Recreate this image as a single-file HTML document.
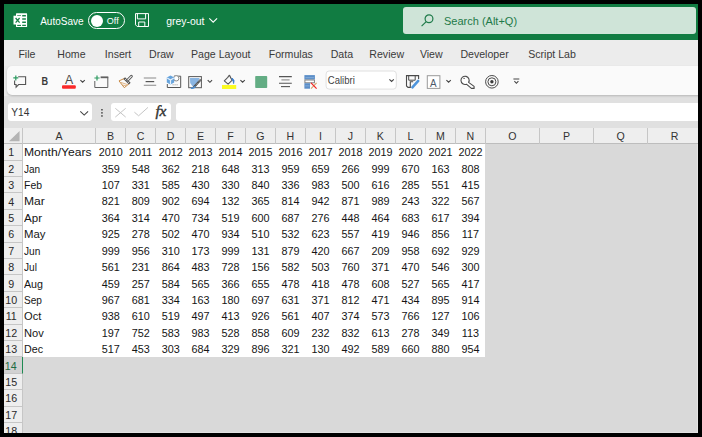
<!DOCTYPE html>
<html lang="en">
<head>
<meta charset="utf-8">
<title>grey-out - Excel</title>
<style>
*{box-sizing:border-box;margin:0;padding:0}
html,body{width:702px;height:437px;overflow:hidden;background:#000}
body{font-family:"Liberation Sans",sans-serif;position:relative;color:#333}
.abs,.app *{position:absolute}
.app{position:absolute;left:4px;top:4px;width:694px;height:429px;background:#d9d9d9;overflow:hidden}
/* coordinates inside .app are shifted by -4,-4: use wrapper */
.w{position:absolute;left:-4px;top:-4px;width:702px;height:437px}
.title{left:4px;top:4px;width:694px;height:36px;background:#117c42}
.title span{color:#fff;white-space:nowrap}
.search{left:403px;top:7.1px;width:292.8px;height:26.6px;background:#cfe4d8;border-radius:3px}
.search span{color:#1e7a49;font-size:11px;left:41px;top:7.7px;line-height:13px}
.menu{left:4px;top:40px;width:694px;height:26px;background:#ececec}
.menu span{font-size:10.6px;line-height:14px;top:7.4px;color:#3a3a3a;white-space:nowrap}
.ribbonbg{left:4px;top:66px;width:694px;height:37px;background:#e9e9e9}
.card{left:7px;top:66px;width:700px;height:29.4px;background:#fafafa;border-radius:5px;box-shadow:0 1px 2px rgba(0,0,0,.22)}
.fbar{left:4px;top:95.5px;width:694px;height:32.5px;background:#e0e0e0}
.namebox{left:8px;top:103.4px;width:84px;height:17.8px;background:#fff;border-radius:3px}
.namebox span{font-size:10.2px;left:3.2px;top:3.8px;line-height:12px;color:#333}
.fbtn{left:110.5px;top:103.4px;width:60.3px;height:17.8px;background:#fff;border-radius:3px}
.finput{left:176.2px;top:103.4px;width:530px;height:17.8px;background:#fff;border-radius:3px}
.fx{font-family:"Liberation Serif",serif;font-style:italic;font-size:15.5px;left:155.4px;top:103.2px;line-height:16px;color:#333;letter-spacing:-0.2px;-webkit-text-stroke:.4px #333}
svg{position:absolute;overflow:visible}
/* sheet */
.sheet{left:0;top:0;width:702px;height:437px}
.white{background:#fff}
.colhdr{left:4px;width:694px;background:#eee;border-bottom:1px solid #bdbdbd}
.corner{left:4px;top:127.5px;width:18.9px;height:16px;border-right:1px solid #c6c6c6}
.ch{top:127.5px;height:16px;font-size:10.6px;line-height:16px;text-align:center;color:#333;border-right:1px solid #c6c6c6;padding-top:0.7px}
.rowhdr{left:4px;top:143.5px;width:18.9px;height:300px;background:#eee;border-right:1px solid #c6c6c6}
.rh{left:4px;width:18.9px;height:16.41px;font-size:10.7px;line-height:16.4px;text-align:center;color:#2a2a2a;border-bottom:1px solid #c6c6c6;padding-right:4.5px;padding-top:0.2px;margin-top:0.6px}
.rh.sel{background:#d2d2d2;color:#1e6b41;border-right:1.2px solid #1f8a52}
.c{height:16.41px;font-size:10.8px;line-height:16.4px;color:#151515;white-space:nowrap;padding-top:0.75px}
.c.a{left:24.4px;transform-origin:0 0}
.c.n{width:29.98px;text-align:center}
</style>
</head>
<body>
<div class="app"><div class="w">

<!-- title bar -->
<div class="title"></div>
<svg style="left:13px;top:13px" width="15" height="15" viewBox="13 13 15 15">
  <rect x="16" y="13.3" width="11.1" height="13.7" rx=".6" fill="#fff"/>
  <path d="M22.2 14.9h3.7v1.6h-3.7zM22.2 18.2h3.7v1.6h-3.7zM22.2 21.5h3.7v1.6h-3.7zM22.2 24.7h3.7v1.4h-3.7zM17.2 14.9h3.8v1.6h-3.8zM17.2 24.7h3.8v1.4h-3.8z" fill="#1a8349"/>
  <rect x="13.5" y="15.7" width="7.7" height="8.8" fill="#fff"/>
  <path d="M15.6 18L19.6 22.7M19.6 18L15.6 22.7" stroke="#1a8349" stroke-width="1.3" fill="none"/>
</svg>
<div class="title" style="background:none"><span style="left:36.2px;top:11.9px;font-size:10px;line-height:12px">AutoSave</span></div>
<div style="left:87.8px;top:12.2px;width:37.4px;height:17px;border:1px solid #fff;border-radius:9px"></div>
<div style="left:90.6px;top:14.5px;width:12.2px;height:12.2px;border-radius:50%;background:#fff"></div>
<div class="title" style="background:none"><span style="left:102.8px;top:11.6px;font-size:9px;line-height:11px">Off</span></div>
<svg style="left:135px;top:13.3px" width="14" height="14" viewBox="0 0 14 14" fill="none" stroke="#fff" stroke-width="1">
  <path d="M0.5 0.6H13.5V13.5H2.2L0.5 11.8Z"/>
  <path d="M2.4 0.5V5.9H10.6V0.5M3.7 13.5V9H9.8V13.5"/>
</svg>
<div class="title" style="background:none"><span style="left:162.3px;top:10.6px;font-size:10.4px;line-height:13px">grey-out</span></div>
<svg style="left:208.9px;top:18.1px" width="8.4" height="4.8" viewBox="0 0 8.4 4.8"><path d="M0.3 0.4L4.2 4.2L8.1 0.4" stroke="#fff" stroke-width="1.1" fill="none"/></svg>
<div class="search"><span>Search (Alt+Q)</span></div>
<svg style="left:420.5px;top:14px" width="13" height="13" viewBox="0 0 13 13" fill="none" stroke="#1e7a49" stroke-width="1.2"><circle cx="8" cy="4.8" r="3.9"/><path d="M5.2 7.6L0.6 12.2"/></svg>

<!-- menu -->
<div class="menu">
<span style="left:14.4px">File</span>
<span style="left:53.3px">Home</span>
<span style="left:100.8px">Insert</span>
<span style="left:145px">Draw</span>
<span style="left:187px">Page Layout</span>
<span style="left:264.7px">Formulas</span>
<span style="left:326.7px">Data</span>
<span style="left:365.3px">Review</span>
<span style="left:415.9px">View</span>
<span style="left:456.4px">Developer</span>
<span style="left:524.2px">Script Lab</span>
</div>

<!-- ribbon -->
<div class="ribbonbg"></div>
<div class="fbar"></div>
<div class="card"></div>
<svg style="left:0;top:66px" width="702" height="30" viewBox="0 66 702 30" fill="none">
  <!-- new comment -->
  <path d="M18.2 76.7H25.6V84.5H18.6L16.1 87.1V84.5H14.6V80.4" stroke="#555" stroke-width="1.1"/>
  <path d="M15.8 75.4V80.4M13.3 77.9H18.3" stroke="#2c9a60" stroke-width="1.2"/>
  <!-- bold -->
  <text x="41.6" y="85.1" font-family="Liberation Sans, sans-serif" font-weight="bold" font-size="11.2" fill="#3a3a3a" textLength="6.6" lengthAdjust="spacingAndGlyphs">B</text>
  <!-- font colour -->
  <text x="64.9" y="84.4" font-family="Liberation Sans, sans-serif" font-size="12.6" fill="#4a4a4a" textLength="8.2" lengthAdjust="spacingAndGlyphs">A</text>
  <rect x="62" y="85.2" width="13.8" height="3.6" rx="1" fill="#fa2a2a"/>
  <path d="M80.4 80.1L82.6 82.2L84.8 80.1" stroke="#444" stroke-width="1.1"/>
  <!-- new window/sheet -->
  <path d="M94.8 81V87.5H107.8V77.3" stroke="#606060" stroke-width="1"/>
  <path d="M100.6 77.3H108.3" stroke="#606060" stroke-width="1.8"/>
  <path d="M97 75.4V80.6M94.4 78H99.6" stroke="#2c9a60" stroke-width="1.2"/>
  <!-- format painter -->
  <path d="M124.3 78.5L119 80.9L124.3 87.7L129.4 83.4Z" stroke="#c98a45" stroke-width="1" stroke-linejoin="round"/>
  <path d="M120.8 82.4L127.5 84.6M122.4 85L126 85.8" stroke="#d9a56b" stroke-width=".8"/>
  <path d="M124.2 78.2L129.8 83.6" stroke="#555" stroke-width="2.4"/><path d="M125 79L129 82.8" stroke="#f2f2f2" stroke-width=".8"/>
  <path d="M127.6 80.2L131.4 76.2" stroke="#555" stroke-width="2.8" stroke-linecap="round"/>
  <path d="M127.9 79.9L131.3 76.3" stroke="#f4f4f4" stroke-width="1.1" stroke-linecap="round"/>
  <!-- align -->
  <path d="M143.8 78H156.2M143.8 85.2H156.2" stroke="#8a8a8a" stroke-width="1.1"/>
  <path d="M145.6 81.6H154.2" stroke="#555" stroke-width="1.2"/>
  <!-- 3d models -->
  <path d="M174 76.2H180.7V87.5H167.3V84" stroke="#555" stroke-width="1"/>
  <path d="M172.5 84.8H178.5" stroke="#999" stroke-width=".9" stroke-dasharray="1.2 .8"/>
  <circle cx="176.2" cy="78.3" r="2.7" fill="#fff" stroke="#8a8a8a" stroke-width="1"/>
  <path d="M170.5 75.4L174.2 77.6V82.4L170.5 84.6L166.8 82.4V77.6Z" fill="#66a3dc"/>
  <path d="M170.5 80V84.2M167.2 78L170.5 80L173.8 78" stroke="#e6f0fa" stroke-width="1.2"/>
  <!-- picture format -->
  <rect x="188.7" y="76.6" width="12.7" height="11.1" stroke="#5a5a5a" stroke-width="1"/>
  <path d="M190 77.9H199.6L196 86.8H192.8L190.2 83Z" fill="#8ab5e2"/>
  <path d="M200.8 79.6L193.8 87.2" stroke="#444" stroke-width="2"/>
  <path d="M200.4 80L194.6 86.3" stroke="#e8e8e8" stroke-width=".8" stroke-dasharray="1 1"/>
  <path d="M191.6 88.1Q193.6 88.6 195 86.6" stroke="#4a8fd6" stroke-width="1.6" stroke-linecap="round"/>
  <path d="M207.7 80.2L209.9 82.3L212.1 80.2" stroke="#444" stroke-width="1.1"/>
  <!-- fill colour -->
  <path d="M224.3 80.8L227.8 77.4L229.2 75.3Q230.2 76 230.6 77.6L232.2 80.2L228.1 84.2Z" stroke="#555" stroke-width="1.1" stroke-linejoin="round"/>
  <path d="M232.2 78Q235.2 80.4 233.6 83.6Q233.4 80.6 232 79.4Z" fill="#3b7fd0" stroke="#3b7fd0" stroke-width=".8"/>
  <rect x="222" y="85" width="14.2" height="4" fill="#fbfb22"/>
  <path d="M240.4 80.1L242.6 82.2L244.8 80.1" stroke="#444" stroke-width="1.1"/>
  <!-- green square -->
  <rect x="255.2" y="76" width="12" height="12" rx=".8" fill="#63ad84"/>
  <!-- centre -->
  <path d="M279 76.6H291.8M279 83.3H291.8" stroke="#555" stroke-width="1.1"/>
  <path d="M281.4 79.9H289.6" stroke="#8a8a8a" stroke-width="1.1"/>
  <path d="M281 86.6H290" stroke="#555" stroke-width="1.1"/>
  <!-- clear table -->
  <rect x="304.4" y="75.1" width="10.5" height="4.4" fill="#5b8ec8"/>
  <path d="M305.4 77.7H313.9" stroke="#8fb4dd" stroke-width=".8"/>
  <rect x="304.9" y="80" width="9.5" height="2.8" fill="#fff" stroke="#777" stroke-width=".9"/>
  <rect x="304.4" y="83.2" width="5.6" height="5.5" fill="#5b8ec8"/>
  <path d="M305.2 85.9H309.6" stroke="#8fb4dd" stroke-width=".8"/>
  <path d="M316.6 82.8L311 88.6" stroke="#d6a36c" stroke-width="1.1"/>
  <path d="M311 82.8L316.6 88.6" stroke="#f52222" stroke-width="1.2"/>
  <!-- font box -->
  <rect x="326.1" y="71" width="70.2" height="18.1" rx="3" fill="#fff" stroke="#dcdcdc" stroke-width=".9"/>
  <text x="327.8" y="84.4" font-family="Liberation Sans, sans-serif" font-size="10.6" fill="#444" textLength="27" lengthAdjust="spacingAndGlyphs">Calibri</text>
  <path d="M389.4 79.4L391.6 81.5L393.8 79.4" stroke="#444" stroke-width="1.1"/>
  <!-- save as -->
  <path d="M413.2 81.7H410.3V87.4H408L406.5 86V75.6H418.6V79" stroke="#4a4a4a" stroke-width="1.1"/>
  <path d="M408.7 75.6V80.2H415.2V75.6" stroke="#4a4a4a" stroke-width="1"/>
  <path d="M418.2 80.9L412.4 87.4" stroke="#4f95dc" stroke-width="2.6" stroke-linecap="round"/>
  <!-- text box A -->
  <rect x="427.3" y="75.7" width="12.6" height="12.7" fill="#fff" stroke="#9a9a9a" stroke-width="1"/>
  <text x="430" y="86.9" font-family="Liberation Sans, sans-serif" font-size="11" fill="#4d5a6a" textLength="6.6" lengthAdjust="spacingAndGlyphs">A</text>
  <path d="M446.4 80.1L448.6 82.2L450.8 80.1" stroke="#444" stroke-width="1.1"/>
  <!-- key -->
  <path d="M468.6 82.4A4.1 4.1 0 1 0 466.4 84.2L471.4 88.4H474.1V86.4Z" fill="#fff" stroke="#4a4a4a" stroke-width="1.1" stroke-linejoin="round"/>
  <path d="M463.4 78.4H464.8" stroke="#4a4a4a" stroke-width="1"/>
  <!-- target -->
  <circle cx="491.9" cy="81.8" r="6.3" stroke="#4a4a4a" stroke-width="1"/>
  <circle cx="491.9" cy="81.8" r="4" stroke="#4a4a4a" stroke-width="1"/>
  <circle cx="491.9" cy="81.8" r="1.7" fill="#3a3a3a"/>
  <!-- overflow -->
  <path d="M513.4 79H519.3" stroke="#555" stroke-width="1.1"/>
  <path d="M514.4 81.2L516.4 83.3L518.4 81.2" stroke="#444" stroke-width="1.1"/>
</svg>


<!-- formula bar -->
<div class="namebox"><span>Y14</span></div>
<svg style="left:79.8px;top:111px" width="8.4" height="4.6" viewBox="0 0 8.4 4.6"><path d="M0.3 0.4L4.2 4.1L8.1 0.4" stroke="#444" stroke-width="1.1" fill="none"/></svg>
<svg style="left:100.5px;top:108.6px" width="2" height="8" viewBox="0 0 2 8" fill="#444"><rect x="0.2" y="0" width="1.5" height="1.5"/><rect x="0.2" y="3.1" width="1.5" height="1.5"/><rect x="0.2" y="6.2" width="1.5" height="1.5"/></svg>
<div class="fbtn"></div>
<svg style="left:115px;top:108px" width="11" height="9.4" viewBox="0 0 11 9.4"><path d="M0.3 0.3L10.7 9.1M10.7 0.3L0.3 9.1" stroke="#c4c4c4" stroke-width="1" fill="none"/></svg>
<svg style="left:133.5px;top:107.4px" width="14.4" height="9.2" viewBox="0 0 14.4 9.2"><path d="M0.4 5.2L4.6 8.8L14 0.4" stroke="#c4c4c4" stroke-width="1" fill="none"/></svg>
<div class="fx">fx</div>
<div class="finput"></div>

<div class="sheet">
<div class="white" style="left:22.9px;top:143.5px;width:462.54px;height:213.33px"></div>
<div class="colhdr" style="top:127.5px;height:16.5px"></div>
<div class="corner"></div><svg style="left:8.8px;top:131.3px" width="10.6" height="10.2" viewBox="0 0 10.6 10.2"><path d="M10.6 0V10.2H0Z" fill="#b4b4b4"/></svg>
<div class="ch" style="left:22.90px;width:73.50px">A</div>
<div class="ch" style="left:95.70px;width:30.68px">B</div>
<div class="ch" style="left:125.68px;width:30.68px">C</div>
<div class="ch" style="left:155.66px;width:30.68px">D</div>
<div class="ch" style="left:185.64px;width:30.68px">E</div>
<div class="ch" style="left:215.62px;width:30.68px">F</div>
<div class="ch" style="left:245.60px;width:30.68px">G</div>
<div class="ch" style="left:275.58px;width:30.68px">H</div>
<div class="ch" style="left:305.56px;width:30.68px">I</div>
<div class="ch" style="left:335.54px;width:30.68px">J</div>
<div class="ch" style="left:365.52px;width:30.68px">K</div>
<div class="ch" style="left:395.50px;width:30.68px">L</div>
<div class="ch" style="left:425.48px;width:30.68px">M</div>
<div class="ch" style="left:455.46px;width:30.68px">N</div>
<div class="ch" style="left:485.44px;width:54.80px">O</div>
<div class="ch" style="left:539.54px;width:54.80px">P</div>
<div class="ch" style="left:593.64px;width:54.80px">Q</div>
<div class="ch" style="left:647.74px;width:54.80px">R</div>
<div class="rowhdr"></div>
<div class="rh" style="top:143.50px">1</div>
<div class="rh" style="top:159.91px">2</div>
<div class="rh" style="top:176.32px">3</div>
<div class="rh" style="top:192.73px">4</div>
<div class="rh" style="top:209.14px">5</div>
<div class="rh" style="top:225.55px">6</div>
<div class="rh" style="top:241.96px">7</div>
<div class="rh" style="top:258.37px">8</div>
<div class="rh" style="top:274.78px">9</div>
<div class="rh" style="top:291.19px">10</div>
<div class="rh" style="top:307.60px">11</div>
<div class="rh" style="top:324.01px">12</div>
<div class="rh" style="top:340.42px">13</div>
<div class="rh sel" style="top:356.83px">14</div>
<div class="rh" style="top:373.24px">15</div>
<div class="rh" style="top:389.65px">16</div>
<div class="rh" style="top:406.06px">17</div>
<div class="rh" style="top:422.47px">18</div>
<div class="c a" style="top:143.50px;transform:scaleX(1.122)">Month/Years</div>
<div class="c n" style="top:143.50px;left:95.70px">2010</div>
<div class="c n" style="top:143.50px;left:125.68px">2011</div>
<div class="c n" style="top:143.50px;left:155.66px">2012</div>
<div class="c n" style="top:143.50px;left:185.64px">2013</div>
<div class="c n" style="top:143.50px;left:215.62px">2014</div>
<div class="c n" style="top:143.50px;left:245.60px">2015</div>
<div class="c n" style="top:143.50px;left:275.58px">2016</div>
<div class="c n" style="top:143.50px;left:305.56px">2017</div>
<div class="c n" style="top:143.50px;left:335.54px">2018</div>
<div class="c n" style="top:143.50px;left:365.52px">2019</div>
<div class="c n" style="top:143.50px;left:395.50px">2020</div>
<div class="c n" style="top:143.50px;left:425.48px">2021</div>
<div class="c n" style="top:143.50px;left:455.46px">2022</div>
<div class="c a" style="top:159.91px;transform:scaleX(0.930)">Jan</div>
<div class="c n" style="top:159.91px;left:95.70px">359</div>
<div class="c n" style="top:159.91px;left:125.68px">548</div>
<div class="c n" style="top:159.91px;left:155.66px">362</div>
<div class="c n" style="top:159.91px;left:185.64px">218</div>
<div class="c n" style="top:159.91px;left:215.62px">648</div>
<div class="c n" style="top:159.91px;left:245.60px">313</div>
<div class="c n" style="top:159.91px;left:275.58px">959</div>
<div class="c n" style="top:159.91px;left:305.56px">659</div>
<div class="c n" style="top:159.91px;left:335.54px">266</div>
<div class="c n" style="top:159.91px;left:365.52px">999</div>
<div class="c n" style="top:159.91px;left:395.50px">670</div>
<div class="c n" style="top:159.91px;left:425.48px">163</div>
<div class="c n" style="top:159.91px;left:455.46px">808</div>
<div class="c a" style="top:176.32px;transform:scaleX(0.967)">Feb</div>
<div class="c n" style="top:176.32px;left:95.70px">107</div>
<div class="c n" style="top:176.32px;left:125.68px">331</div>
<div class="c n" style="top:176.32px;left:155.66px">585</div>
<div class="c n" style="top:176.32px;left:185.64px">430</div>
<div class="c n" style="top:176.32px;left:215.62px">330</div>
<div class="c n" style="top:176.32px;left:245.60px">840</div>
<div class="c n" style="top:176.32px;left:275.58px">336</div>
<div class="c n" style="top:176.32px;left:305.56px">983</div>
<div class="c n" style="top:176.32px;left:335.54px">500</div>
<div class="c n" style="top:176.32px;left:365.52px">616</div>
<div class="c n" style="top:176.32px;left:395.50px">285</div>
<div class="c n" style="top:176.32px;left:425.48px">551</div>
<div class="c n" style="top:176.32px;left:455.46px">415</div>
<div class="c a" style="top:192.73px;transform:scaleX(1.118)">Mar</div>
<div class="c n" style="top:192.73px;left:95.70px">821</div>
<div class="c n" style="top:192.73px;left:125.68px">809</div>
<div class="c n" style="top:192.73px;left:155.66px">902</div>
<div class="c n" style="top:192.73px;left:185.64px">694</div>
<div class="c n" style="top:192.73px;left:215.62px">132</div>
<div class="c n" style="top:192.73px;left:245.60px">365</div>
<div class="c n" style="top:192.73px;left:275.58px">814</div>
<div class="c n" style="top:192.73px;left:305.56px">942</div>
<div class="c n" style="top:192.73px;left:335.54px">871</div>
<div class="c n" style="top:192.73px;left:365.52px">989</div>
<div class="c n" style="top:192.73px;left:395.50px">243</div>
<div class="c n" style="top:192.73px;left:425.48px">322</div>
<div class="c n" style="top:192.73px;left:455.46px">567</div>
<div class="c a" style="top:209.14px;transform:scaleX(1.071)">Apr</div>
<div class="c n" style="top:209.14px;left:95.70px">364</div>
<div class="c n" style="top:209.14px;left:125.68px">314</div>
<div class="c n" style="top:209.14px;left:155.66px">470</div>
<div class="c n" style="top:209.14px;left:185.64px">734</div>
<div class="c n" style="top:209.14px;left:215.62px">519</div>
<div class="c n" style="top:209.14px;left:245.60px">600</div>
<div class="c n" style="top:209.14px;left:275.58px">687</div>
<div class="c n" style="top:209.14px;left:305.56px">276</div>
<div class="c n" style="top:209.14px;left:335.54px">448</div>
<div class="c n" style="top:209.14px;left:365.52px">464</div>
<div class="c n" style="top:209.14px;left:395.50px">683</div>
<div class="c n" style="top:209.14px;left:425.48px">617</div>
<div class="c n" style="top:209.14px;left:455.46px">394</div>
<div class="c a" style="top:225.55px;transform:scaleX(1.054)">May</div>
<div class="c n" style="top:225.55px;left:95.70px">925</div>
<div class="c n" style="top:225.55px;left:125.68px">278</div>
<div class="c n" style="top:225.55px;left:155.66px">502</div>
<div class="c n" style="top:225.55px;left:185.64px">470</div>
<div class="c n" style="top:225.55px;left:215.62px">934</div>
<div class="c n" style="top:225.55px;left:245.60px">510</div>
<div class="c n" style="top:225.55px;left:275.58px">532</div>
<div class="c n" style="top:225.55px;left:305.56px">623</div>
<div class="c n" style="top:225.55px;left:335.54px">557</div>
<div class="c n" style="top:225.55px;left:365.52px">419</div>
<div class="c n" style="top:225.55px;left:395.50px">946</div>
<div class="c n" style="top:225.55px;left:425.48px">856</div>
<div class="c n" style="top:225.55px;left:455.46px">117</div>
<div class="c a" style="top:241.96px;transform:scaleX(0.936)">Jun</div>
<div class="c n" style="top:241.96px;left:95.70px">999</div>
<div class="c n" style="top:241.96px;left:125.68px">956</div>
<div class="c n" style="top:241.96px;left:155.66px">310</div>
<div class="c n" style="top:241.96px;left:185.64px">173</div>
<div class="c n" style="top:241.96px;left:215.62px">999</div>
<div class="c n" style="top:241.96px;left:245.60px">131</div>
<div class="c n" style="top:241.96px;left:275.58px">879</div>
<div class="c n" style="top:241.96px;left:305.56px">420</div>
<div class="c n" style="top:241.96px;left:335.54px">667</div>
<div class="c n" style="top:241.96px;left:365.52px">209</div>
<div class="c n" style="top:241.96px;left:395.50px">958</div>
<div class="c n" style="top:241.96px;left:425.48px">692</div>
<div class="c n" style="top:241.96px;left:455.46px">929</div>
<div class="c a" style="top:258.37px;transform:scaleX(0.934)">Jul</div>
<div class="c n" style="top:258.37px;left:95.70px">561</div>
<div class="c n" style="top:258.37px;left:125.68px">231</div>
<div class="c n" style="top:258.37px;left:155.66px">864</div>
<div class="c n" style="top:258.37px;left:185.64px">483</div>
<div class="c n" style="top:258.37px;left:215.62px">728</div>
<div class="c n" style="top:258.37px;left:245.60px">156</div>
<div class="c n" style="top:258.37px;left:275.58px">582</div>
<div class="c n" style="top:258.37px;left:305.56px">503</div>
<div class="c n" style="top:258.37px;left:335.54px">760</div>
<div class="c n" style="top:258.37px;left:365.52px">371</div>
<div class="c n" style="top:258.37px;left:395.50px">470</div>
<div class="c n" style="top:258.37px;left:425.48px">546</div>
<div class="c n" style="top:258.37px;left:455.46px">300</div>
<div class="c a" style="top:274.78px;transform:scaleX(0.989)">Aug</div>
<div class="c n" style="top:274.78px;left:95.70px">459</div>
<div class="c n" style="top:274.78px;left:125.68px">257</div>
<div class="c n" style="top:274.78px;left:155.66px">584</div>
<div class="c n" style="top:274.78px;left:185.64px">565</div>
<div class="c n" style="top:274.78px;left:215.62px">366</div>
<div class="c n" style="top:274.78px;left:245.60px">655</div>
<div class="c n" style="top:274.78px;left:275.58px">478</div>
<div class="c n" style="top:274.78px;left:305.56px">418</div>
<div class="c n" style="top:274.78px;left:335.54px">478</div>
<div class="c n" style="top:274.78px;left:365.52px">608</div>
<div class="c n" style="top:274.78px;left:395.50px">527</div>
<div class="c n" style="top:274.78px;left:425.48px">565</div>
<div class="c n" style="top:274.78px;left:455.46px">417</div>
<div class="c a" style="top:291.19px;transform:scaleX(0.937)">Sep</div>
<div class="c n" style="top:291.19px;left:95.70px">967</div>
<div class="c n" style="top:291.19px;left:125.68px">681</div>
<div class="c n" style="top:291.19px;left:155.66px">334</div>
<div class="c n" style="top:291.19px;left:185.64px">163</div>
<div class="c n" style="top:291.19px;left:215.62px">180</div>
<div class="c n" style="top:291.19px;left:245.60px">697</div>
<div class="c n" style="top:291.19px;left:275.58px">631</div>
<div class="c n" style="top:291.19px;left:305.56px">371</div>
<div class="c n" style="top:291.19px;left:335.54px">812</div>
<div class="c n" style="top:291.19px;left:365.52px">471</div>
<div class="c n" style="top:291.19px;left:395.50px">434</div>
<div class="c n" style="top:291.19px;left:425.48px">895</div>
<div class="c n" style="top:291.19px;left:455.46px">914</div>
<div class="c a" style="top:307.60px;transform:scaleX(1.030)">Oct</div>
<div class="c n" style="top:307.60px;left:95.70px">938</div>
<div class="c n" style="top:307.60px;left:125.68px">610</div>
<div class="c n" style="top:307.60px;left:155.66px">519</div>
<div class="c n" style="top:307.60px;left:185.64px">497</div>
<div class="c n" style="top:307.60px;left:215.62px">413</div>
<div class="c n" style="top:307.60px;left:245.60px">926</div>
<div class="c n" style="top:307.60px;left:275.58px">561</div>
<div class="c n" style="top:307.60px;left:305.56px">407</div>
<div class="c n" style="top:307.60px;left:335.54px">374</div>
<div class="c n" style="top:307.60px;left:365.52px">573</div>
<div class="c n" style="top:307.60px;left:395.50px">766</div>
<div class="c n" style="top:307.60px;left:425.48px">127</div>
<div class="c n" style="top:307.60px;left:455.46px">106</div>
<div class="c a" style="top:324.01px;transform:scaleX(1.026)">Nov</div>
<div class="c n" style="top:324.01px;left:95.70px">197</div>
<div class="c n" style="top:324.01px;left:125.68px">752</div>
<div class="c n" style="top:324.01px;left:155.66px">583</div>
<div class="c n" style="top:324.01px;left:185.64px">983</div>
<div class="c n" style="top:324.01px;left:215.62px">528</div>
<div class="c n" style="top:324.01px;left:245.60px">858</div>
<div class="c n" style="top:324.01px;left:275.58px">609</div>
<div class="c n" style="top:324.01px;left:305.56px">232</div>
<div class="c n" style="top:324.01px;left:335.54px">832</div>
<div class="c n" style="top:324.01px;left:365.52px">613</div>
<div class="c n" style="top:324.01px;left:395.50px">278</div>
<div class="c n" style="top:324.01px;left:425.48px">349</div>
<div class="c n" style="top:324.01px;left:455.46px">113</div>
<div class="c a" style="top:340.42px;transform:scaleX(0.989)">Dec</div>
<div class="c n" style="top:340.42px;left:95.70px">517</div>
<div class="c n" style="top:340.42px;left:125.68px">453</div>
<div class="c n" style="top:340.42px;left:155.66px">303</div>
<div class="c n" style="top:340.42px;left:185.64px">684</div>
<div class="c n" style="top:340.42px;left:215.62px">329</div>
<div class="c n" style="top:340.42px;left:245.60px">896</div>
<div class="c n" style="top:340.42px;left:275.58px">321</div>
<div class="c n" style="top:340.42px;left:305.56px">130</div>
<div class="c n" style="top:340.42px;left:335.54px">492</div>
<div class="c n" style="top:340.42px;left:365.52px">589</div>
<div class="c n" style="top:340.42px;left:395.50px">660</div>
<div class="c n" style="top:340.42px;left:425.48px">880</div>
<div class="c n" style="top:340.42px;left:455.46px">954</div>
</div>
<div style="left:697px;top:144px;width:1px;height:289px;background:#e4e4e4"></div>
<div style="left:23px;top:432px;width:675px;height:1px;background:#e2e2e2"></div>

</div></div>
</body>
</html>
